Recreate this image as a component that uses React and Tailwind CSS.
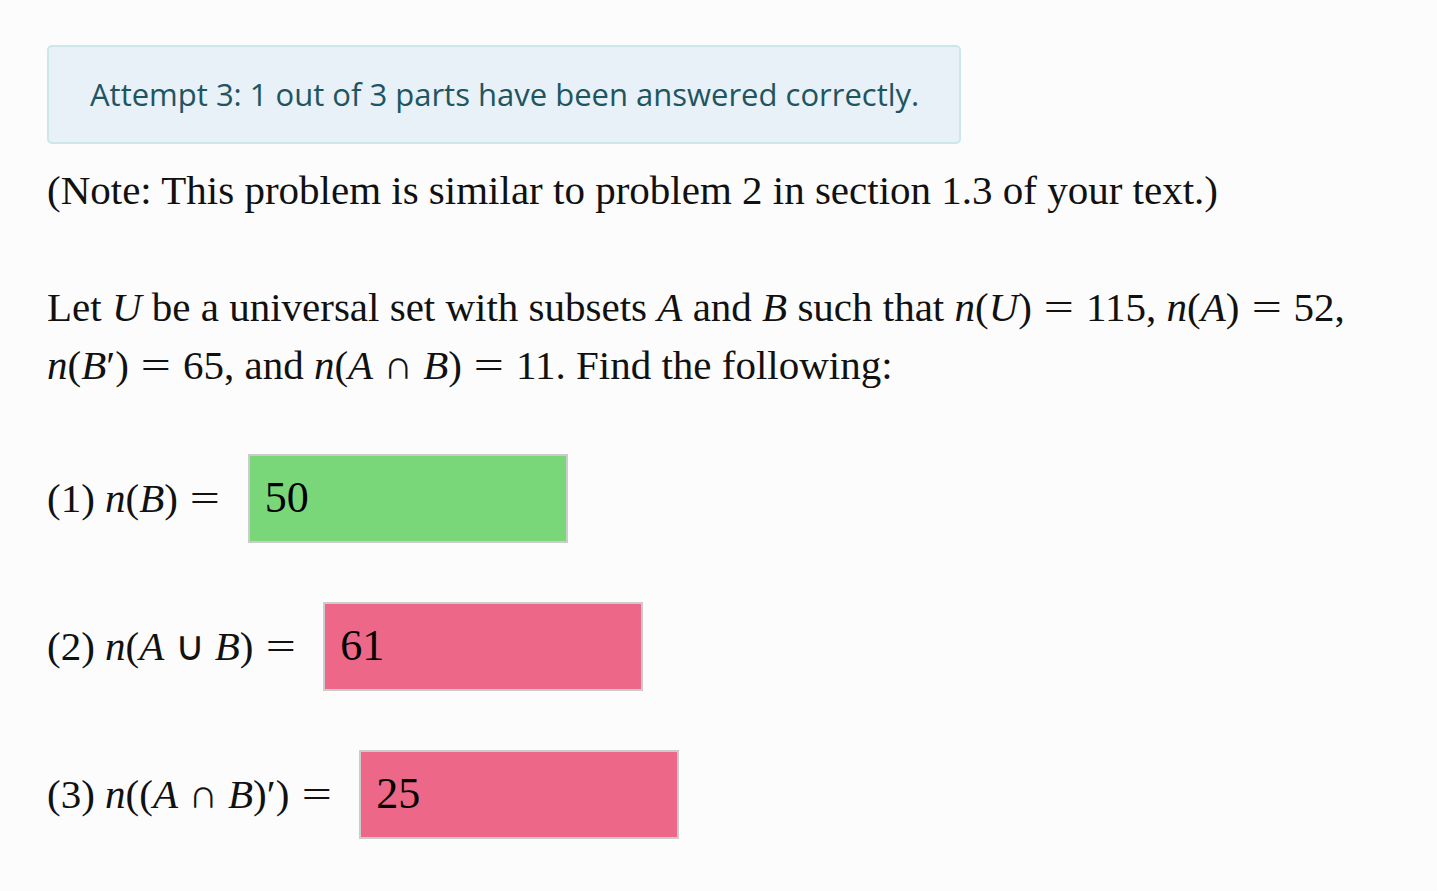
import React from "react";

const SERIF = { fontFamily: '"Liberation Serif", "Times New Roman", serif' };
const I = ({ children }) => <span className="italic">{children}</span>;
const Eq = ({ last }) => (
  <span
    className={`inline-block w-[0.72em] text-center scale-x-[1.3] ml-[0.3em] ${last ? "" : "mr-[0.3em]"}`}
  >
    =
  </span>
);
const Set = ({ children }) => <span className="mx-[0.25em]">{children}</span>;

function Row({ label, value, ok }) {
  return (
    <div className="flex items-center h-[88px]">
      <span className="text-[41px] leading-none" style={SERIF}>{label}</span>
      <div
        className={`ml-[28px] w-[320px] h-[89px] border-2 border-[#cccccc] flex items-center pl-[15px] text-black ${
          ok ? "bg-[#79d77a]" : "bg-[#ec6788]"
        }`}
      >
        <span className="text-[44px] leading-none" style={SERIF}>{value}</span>
      </div>
    </div>
  );
}

export default function App() {
  return (
    <div
      className="min-h-[891px] w-full bg-[#fcfcfc] pl-[47px] pt-[45px] text-[#111]"
      style={SERIF}
    >
      <div
        className="w-[914px] h-[99px] rounded-[5px] border-2 border-[#cde6ec] bg-[#e8f0f8] flex items-center pl-[41px] text-[31px] text-[#205560]"
        style={{ fontFamily: '"Open Sans", "Liberation Sans", sans-serif' }}
      >
        Attempt 3: 1 out of 3 parts have been answered correctly.
      </div>

      <p className="mt-[22px] text-[41px] leading-[48px]">
        (Note: This problem is similar to problem 2 in section 1.3 of your text.)
      </p>

      <p className="mt-[64px] text-[41px] leading-[58px] w-[1380px]">
        Let <I>U</I> be a universal set with subsets <I>A</I> and <I>B</I> such that{" "}
        <I>n</I>(<I>U</I>)<Eq />115, <I>n</I>(<I>A</I>)<Eq />52,
        <br />
        <I>n</I>(<I>B</I>′)<Eq />65, and <I>n</I>(<I>A</I>
        <Set>∩</Set>
        <I>B</I>)<Eq />11. Find the following:
      </p>

      <div className="mt-[60px] flex flex-col gap-[60px]">
        <Row
          label={
            <>
              (1) <I>n</I>(<I>B</I>)<Eq last />
            </>
          }
          value="50"
          ok
        />
        <Row
          label={
            <>
              (2) <I>n</I>(<I>A</I>
              <Set>∪</Set>
              <I>B</I>)<Eq last />
            </>
          }
          value="61"
        />
        <Row
          label={
            <>
              (3) <I>n</I>((<I>A</I>
              <Set>∩</Set>
              <I>B</I>)′)<Eq last />
            </>
          }
          value="25"
        />
      </div>
    </div>
  );
}
